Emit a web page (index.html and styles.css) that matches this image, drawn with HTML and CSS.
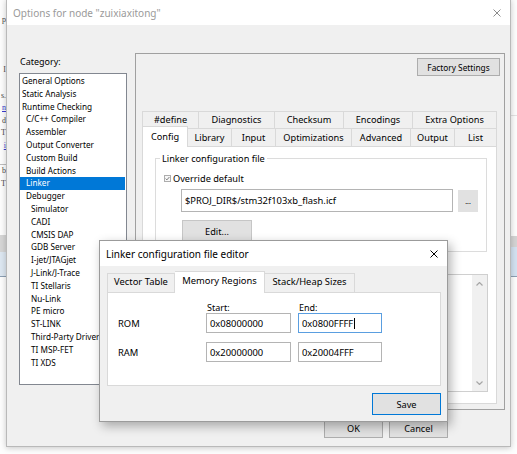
FILE: index.html
```html
<!DOCTYPE html>
<html lang="en">
<head>
    <meta charset="UTF-8">
    <meta name="viewport" content="width=device-width, initial-scale=1.0">
    <title>Options for node</title>
    <link rel="stylesheet" href="styles.css">
</head>
<body>
    <!-- bits of the IDE peeking out behind the dialogs -->
    <div class="desk-left">
        <div class="peek-line">p</div>
        <div class="peek-line"></div>
        <div class="peek-line"></div>
        <div class="peek-line"></div>
        <div class="peek-line">I</div>
        <div class="peek-line"></div>
        <div class="peek-line">s.</div>
        <div class="peek-line link">n</div>
        <div class="peek-line">d</div>
        <div class="peek-line">T</div>
        <div class="peek-line link">i</div>
        <div class="peek-line rule"></div>
        <div class="peek-line">b</div>
        <div class="peek-line">T</div>
        <div class="peek-bar"></div>
        <div class="peek-tab"></div>
    </div>
    <div class="desk-right">
        <div class="peek-rule"></div>
        <div class="peek-bar"></div>
        <div class="peek-tab"></div>
    </div>

    <div class="window options-window">
        <div class="title-bar">
            <span class="title">Options for node "zuixiaxitong"</span>
            <svg class="close-x" width="8" height="8" viewBox="0 0 8 8"><path d="M0.5 0.5L7.5 7.5M7.5 0.5L0.5 7.5"/></svg>
        </div>
        <div class="options-body">
            <div class="options-main">
                <div class="category">
                    <div class="category-label">Category:</div>
                    <ul class="category-list">
                        <li class="lvl0">General Options</li>
                        <li class="lvl0">Static Analysis</li>
                        <li class="lvl0">Runtime Checking</li>
                        <li class="lvl1">C/C++ Compiler</li>
                        <li class="lvl1">Assembler</li>
                        <li class="lvl1">Output Converter</li>
                        <li class="lvl1">Custom Build</li>
                        <li class="lvl1">Build Actions</li>
                        <li class="lvl1 selected">Linker</li>
                        <li class="lvl1">Debugger</li>
                        <li class="lvl2">Simulator</li>
                        <li class="lvl2">CADI</li>
                        <li class="lvl2">CMSIS DAP</li>
                        <li class="lvl2">GDB Server</li>
                        <li class="lvl2">I-jet/JTAGjet</li>
                        <li class="lvl2">J-Link/J-Trace</li>
                        <li class="lvl2">TI Stellaris</li>
                        <li class="lvl2">Nu-Link</li>
                        <li class="lvl2">PE micro</li>
                        <li class="lvl2">ST-LINK</li>
                        <li class="lvl2">Third-Party Driver</li>
                        <li class="lvl2">TI MSP-FET</li>
                        <li class="lvl2">TI XDS</li>
                    </ul>
                </div>
                <div class="options-panel">
                    <button class="btn factory-btn">Factory Settings</button>
                    <div class="tabs">
                        <div class="tab-row row-back">
                            <div class="tab">#define</div>
                            <div class="tab">Diagnostics</div>
                            <div class="tab">Checksum</div>
                            <div class="tab">Encodings</div>
                            <div class="tab">Extra Options</div>
                        </div>
                        <div class="tab-row row-front">
                            <div class="tab active">Config</div>
                            <div class="tab">Library</div>
                            <div class="tab">Input</div>
                            <div class="tab">Optimizations</div>
                            <div class="tab">Advanced</div>
                            <div class="tab">Output</div>
                            <div class="tab">List</div>
                        </div>
                        <div class="tab-page config-page">
                            <fieldset class="group">
                                <legend>Linker configuration file</legend>
                                <label class="check-row">
                                    <svg class="check-box" width="7" height="7" viewBox="0 0 7 7"><rect x="0.5" y="0.5" width="6" height="6"/><path d="M1.6 3.6L2.9 4.9L5.4 2"/></svg>
                                    Override default
                                </label>
                                <div class="file-row">
                                    <div class="text-field file-field">$PROJ_DIR$/stm32f103xb_flash.icf</div>
                                    <button class="btn browse-btn">...</button>
                                </div>
                                <button class="btn edit-btn">Edit...</button>
                            </fieldset>
                            <div class="scroll-list">
                                <div class="scrollbar">
                                    <svg width="7" height="4" viewBox="0 0 7 4"><path d="M0.5 3.5L3.5 0.5L6.5 3.5"/></svg>
                                    <svg width="7" height="4" viewBox="0 0 7 4"><path d="M0.5 0.5L3.5 3.5L6.5 0.5"/></svg>
                                </div>
                            </div>
                        </div>
                    </div>
                </div>
            </div>
            <div class="dialog-buttons">
                <button class="btn">OK</button>
                <button class="btn">Cancel</button>
            </div>
        </div>
    </div>

    <div class="window editor-window">
        <div class="title-bar">
            <span class="title">Linker configuration file editor</span>
            <svg class="close-x" width="8" height="8" viewBox="0 0 8 8"><path d="M0.5 0.5L7.5 7.5M7.5 0.5L0.5 7.5"/></svg>
        </div>
        <div class="editor-body">
            <div class="tab-row editor-tabs">
                <div class="tab">Vector Table</div>
                <div class="tab active">Memory Regions</div>
                <div class="tab">Stack/Heap Sizes</div>
            </div>
            <div class="tab-page region-page">
                <div class="region-head">
                    <span class="col-head">Start:</span>
                    <span class="col-head">End:</span>
                </div>
                <div class="region-row">
                    <span class="row-label">ROM</span>
                    <div class="text-field addr">0x08000000</div>
                    <div class="text-field addr focused">0x0800FFFF<span class="caret"></span></div>
                </div>
                <div class="region-row">
                    <span class="row-label">RAM</span>
                    <div class="text-field addr">0x20000000</div>
                    <div class="text-field addr">0x20004FFF</div>
                </div>
            </div>
            <div class="editor-actions">
                <button class="btn default-btn">Save</button>
            </div>
        </div>
    </div>
</body>
</html>
```

FILE: styles.css
```css
body {
    margin: 0px;
    width: 517px;
    height: 454px;
    position: relative;
    overflow: hidden;
    background-color: #fdfdfd;
    font-family: "Noto Sans", sans-serif;
    font-size: 9.2px;
    color: #000000;
}

/* desktop behind the windows */
.desk-left {
    position: absolute;
    left: 0px;
    top: 0px;
    width: 6px;
    padding-top: 14px;
    font-family: "Liberation Serif", serif;
    font-size: 8px;
    color: #4a4a4a;
}
.peek-line {
    display: flex;
    justify-content: flex-end;
    height: 12.6px;
    line-height: 12.6px;
    white-space: nowrap;
}
.peek-line.link {
    color: #3b3bd0;
    text-decoration: underline;
}
.peek-line.rule {
    height: 11.6px;
    border-bottom: 1px solid #bdbdbd;
}
.desk-left .peek-bar {
    margin-top: 44.6px;
    height: 17px;
    background-color: #d6d6d6;
}
.desk-left .peek-tab {
    height: 24px;
    background-color: #dde7f1;
    border-bottom: 1px solid #8c9fb3;
}
.desk-right {
    position: absolute;
    right: 0px;
    top: 0px;
    width: 6px;
}
.peek-rule {
    margin-top: 115px;
    height: 1px;
    background-color: #e3e3e3;
}
.desk-right .peek-bar {
    margin-top: 120px;
    height: 11px;
    background-color: #d4d4d4;
}
.desk-right .peek-tab {
    height: 29px;
    background-color: #d3e2f1;
    border-bottom: 1px solid #8c9fb3;
}

/* windows */
.window {
    position: absolute;
    box-sizing: border-box;
    display: flex;
    flex-direction: column;
    background-color: #f0f0f0;
}
.options-window {
    left: 6px;
    top: -1px;
    width: 505px;
    height: 448px;
    border: 1px solid #b9b9b9;
    box-shadow: 0px 1px 6px rgba(0, 0, 0, 0.22);
}
.editor-window {
    left: 99px;
    top: 240px;
    width: 349px;
    height: 182px;
    border: 1px solid #9b9b9b;
    box-shadow: 3px 4px 10px rgba(0, 0, 0, 0.3);
}
.title-bar {
    flex-shrink: 0;
    display: flex;
    align-items: center;
    justify-content: space-between;
    background-color: #ffffff;
    font-size: 10px;
}
.options-window .title-bar {
    height: 25px;
    padding: 0px 9px 0px 6px;
    color: #9a9a9a;
}
.editor-window .title-bar {
    height: 25px;
    padding: 0px 9px 0px 6px;
    color: #000000;
}
.close-x path {
    fill: none;
    stroke: currentColor;
    stroke-width: 1;
}
.options-window .close-x {
    color: #8c8c8c;
}

/* buttons and fields */
.btn {
    box-sizing: border-box;
    margin: 0px;
    padding: 0px;
    border: 1px solid #adadad;
    background-color: #e1e1e1;
    font-family: inherit;
    font-size: 9.2px;
    color: #000000;
}
.text-field {
    box-sizing: border-box;
    display: flex;
    align-items: center;
    padding-left: 3px;
    border: 1px solid #b4b4b4;
    background-color: #ffffff;
    white-space: nowrap;
    font-size: 9.4px;
}

/* options dialog */
.options-body {
    flex: 1;
    display: flex;
    flex-direction: column;
    padding: 28px 0px 0px 12px;
}
.options-main {
    display: flex;
    align-items: flex-start;
}
.category {
    width: 108px;
    padding-top: 3px;
}
.category-label {
    height: 12px;
    line-height: 12px;
    padding-left: 1px;
    font-size: 9px;
}
.category-list {
    list-style: none;
    box-sizing: border-box;
    width: 108px;
    height: 312px;
    margin: 5px 0px 0px 0px;
    padding: 1px 0px 0px 0px;
    border: 1px solid #828790;
    background-color: #ffffff;
    font-size: 8.2px;
}
.category-list li {
    height: 12.8px;
    line-height: 12.8px;
    margin-right: 1px;
    white-space: nowrap;
}
.lvl0 {
    padding-left: 2px;
}
.lvl1 {
    padding-left: 6px;
}
.lvl2 {
    padding-left: 11px;
}
.category-list .selected {
    background-color: #0078d7;
    color: #ffffff;
}

.options-panel {
    box-sizing: border-box;
    width: 370px;
    height: 357px;
    margin-left: 8px;
    padding: 4px 4px 5px 6px;
    border: 1px solid #a0a0a0;
    display: flex;
    flex-direction: column;
}
.factory-btn {
    align-self: flex-end;
    width: 83px;
    height: 18px;
    font-size: 8.3px;
}
.tabs {
    flex: 1;
    margin: 35px 3px 0px 0px;
    display: flex;
    flex-direction: column;
}

/* tab strips */
.tab-row {
    display: grid;
}
.tab {
    box-sizing: border-box;
    border: 1px solid #d9d9d9;
    border-bottom: none;
    background-color: #f0f0f0;
    text-align: center;
    white-space: nowrap;
}
.tab + .tab {
    border-left: none;
}
.tab.active {
    position: relative;
    z-index: 1;
    margin-top: -2px;
    margin-bottom: -1px;
    background-color: #ffffff;
}
.row-back {
    grid-template-columns: 57px 76px 69px 69px 84px;
}
.row-back .tab {
    height: 17px;
    line-height: 16px;
}
.row-front {
    grid-template-columns: 46px 44px 44px 76px 59px 44px 42px;
}
.row-front .tab {
    height: 18px;
    line-height: 17px;
}
.row-front .tab.active {
    height: 21px;
    line-height: 19px;
}
.tab-page {
    box-sizing: border-box;
    border: 1px solid #d9d9d9;
    background-color: #ffffff;
}

.config-page {
    flex: 1;
    padding: 5px 9px 0px 12px;
}
.group {
    margin: 0px;
    padding: 7px 8px 9px 8px;
    border: 1px solid #dcdcdc;
    min-inline-size: 0;
}
.group legend {
    margin-left: -4px;
    padding: 0px 2px;
    line-height: 13px;
}
.check-row {
    display: flex;
    align-items: center;
    height: 13px;
    line-height: 13px;
}
.check-box {
    margin-right: 2px;
}
.check-box rect {
    fill: #f7f7f7;
    stroke: #adadad;
}
.check-box path {
    fill: none;
    stroke: #707070;
    stroke-width: 0.9;
}
.file-row {
    display: flex;
    align-items: flex-start;
    margin: 4px 0px 0px 17px;
}
.file-field {
    width: 274px;
    height: 23px;
}
.browse-btn {
    width: 20px;
    height: 22px;
    margin: 1px 0px 0px 5px;
    border-color: #e1e1e1;
    font-size: 7px;
}
.edit-btn {
    display: block;
    width: 70px;
    height: 22px;
    margin: 8px 0px 0px 18px;
    border-color: #c6c6c6;
}
.scroll-list {
    box-sizing: border-box;
    height: 118px;
    margin: 22px -1px 0px 0px;
    border: 1px solid #cfcfcf;
    display: flex;
    justify-content: flex-end;
}
.scrollbar {
    width: 15px;
    background-color: #f0f0f0;
    display: flex;
    flex-direction: column;
    justify-content: space-between;
    align-items: center;
    padding: 7px 0px 6px 0px;
}
.scrollbar path {
    fill: none;
    stroke: #a6a6a6;
    stroke-width: 1.2;
}

.dialog-buttons {
    display: flex;
    justify-content: flex-end;
    gap: 6px;
    margin-top: 8px;
    padding-right: 62px;
}
.dialog-buttons .btn {
    width: 59px;
    height: 20px;
}

/* linker file editor */
.editor-body {
    flex: 1;
    padding: 7px 6px 6px 7px;
    display: flex;
    flex-direction: column;
}
.editor-tabs {
    grid-template-columns: 68px 90px 90px;
    font-size: 9.4px;
}
.editor-tabs .tab {
    height: 19px;
    line-height: 16px;
}
.editor-tabs .tab.active {
    height: 22px;
    line-height: 18px;
}
.region-page {
    height: 94px;
    padding: 9px 0px 0px 10px;
    font-size: 9.4px;
}
.region-head {
    display: flex;
    height: 11px;
    line-height: 11px;
    padding-left: 88px;
    font-size: 9px;
}
.col-head {
    width: 91px;
    padding-left: 1px;
}
.region-row {
    display: flex;
    align-items: center;
    height: 20px;
}
.region-row + .region-row {
    margin-top: 9px;
}
.row-label {
    width: 88px;
}
.addr {
    width: 85px;
    height: 20px;
}
.addr + .addr {
    width: 84px;
    margin-left: 7px;
}
.addr.focused {
    border-color: #5a9ee0;
}
.caret {
    display: inline-block;
    width: 1px;
    height: 11px;
    margin-left: 1px;
    background-color: #000000;
}
.editor-actions {
    display: flex;
    justify-content: flex-end;
    margin-top: 7px;
}
.default-btn {
    width: 69px;
    height: 22px;
    border-color: #0078d7;
}
```
